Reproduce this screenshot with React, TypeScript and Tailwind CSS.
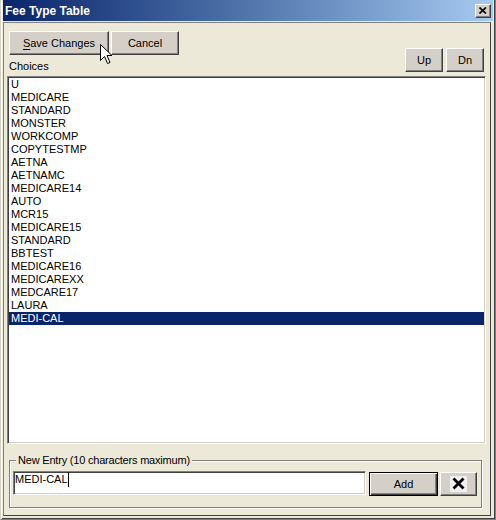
import React from "react";

const raised =
  "border border-t-white border-l-white border-r-[#404040] border-b-[#404040] bg-[#D4D0C8] shadow-[inset_-1px_-1px_0_#808080]";
const sunken =
  "border border-t-[#808080] border-l-[#808080] border-r-white border-b-white bg-white shadow-[inset_1px_1px_0_#404040,inset_-1px_-1px_0_#d4d0c8]";

const choices = [
  "U",
  "MEDICARE",
  "STANDARD",
  "MONSTER",
  "WORKCOMP",
  "COPYTESTMP",
  "AETNA",
  "AETNAMC",
  "MEDICARE14",
  "AUTO",
  "MCR15",
  "MEDICARE15",
  "STANDARD",
  "BBTEST",
  "MEDICARE16",
  "MEDICAREXX",
  "MEDCARE17",
  "LAURA",
  "MEDI-CAL",
];

function Button({ className = "", children }: { className?: string; children: React.ReactNode }) {
  return (
    <button type="button" className={`${raised} flex h-[24px] items-center justify-center text-[11px] leading-[13px] text-black ${className}`}>
      {children}
    </button>
  );
}

function Cursor() {
  return (
    <svg className="pointer-events-none absolute left-[99px] top-[44px]" width="13" height="21" viewBox="0 0 13 21" aria-hidden="true">
      <path
        d="M0.5 0.5 L0.5 16.5 L4.5 12.5 L7.5 19.5 L10 18.5 L7 11.5 L12 11.5 Z"
        fill="#fff"
        stroke="#000"
        strokeWidth="1"
        strokeLinejoin="miter"
      />
    </svg>
  );
}

export default function App() {
  const selected = choices.length - 1;

  return (
    <div className="relative flex h-[520px] w-[496px] flex-col border-x border-b border-l-[#D4D0C8] border-r-[#808080] border-b-[#808080] bg-[#ECE9D8] pl-[2px] pr-[2px] font-['Liberation_Sans',Arial,sans-serif] shadow-[inset_1px_0_0_#fff,inset_-1px_-1px_0_#404040]">
      {/* title bar */}
      <div className="flex h-[21px] w-[490px] items-center justify-between bg-gradient-to-r from-[#0A246A] to-[#A6CAF0] pl-[2px] pr-[2px]">
        <span className="text-[12px] font-bold leading-[14px] text-white">Fee Type Table</span>
        <button type="button" className={`${raised} flex h-[14px] w-[16px] items-center justify-center`}>
          <svg width="8" height="7" viewBox="0 0 8 7" aria-hidden="true">
            <path d="M0.5 0.5 L7 6.5 M7 0.5 L0.5 6.5" stroke="#000" strokeWidth="1.7" />
          </svg>
        </button>
      </div>

      {/* client area */}
      <div className="mt-[1px] flex h-[494px] w-[488px] flex-col border border-t-[#808080] border-l-[#808080] border-r-[#404040] border-b-[#404040]">
        <div className="flex justify-between">
          <div className="ml-[5px] mt-[8px]">
            <div className="flex gap-[2px]">
              <Button className="w-[100px]">
                <span>
                  <span className="underline underline-offset-[2px]">S</span>ave Changes
                </span>
              </Button>
              <Button className="w-[68px]">Cancel</Button>
            </div>
            <div className="mt-[5px] h-[13px] text-[11px] leading-[13px] text-black">Choices</div>
          </div>
          <div className="mr-[6px] mt-[25px] flex gap-[3px]">
            <Button className="w-[38px]">Up</Button>
            <Button className="w-[38px]">Dn</Button>
          </div>
        </div>

        <div className={`${sunken} ml-[3px] mt-[3px] h-[368px] w-[479px] p-[1px]`}>
          {choices.map((c, i) => (
            <div
              key={i}
              className={`h-[13px] pl-[2px] text-[11px] leading-[13px] ${
                i === selected ? "bg-[#0A246A] text-white" : "text-black"
              }`}
            >
              {c}
            </div>
          ))}
        </div>

        <fieldset className="ml-[5px] mt-[10px] w-[473px] border border-[#808080] pb-[11px] pl-[3px] pt-[4px] shadow-[inset_1px_1px_0_#fff,1px_1px_0_#fff]">
          <legend className="ml-[3px] bg-[#ECE9D8] px-[2px] text-[11px] leading-[13px] tracking-[-0.2px] text-black">
            New Entry (10 characters maximum)
          </legend>
          <div className="flex items-start">
            <div className={`${sunken} flex h-[24px] w-[353px] items-start text-[11px] leading-[13px] text-black`}>
              <span className="pl-[1px] pt-[1px]">MEDI-CAL</span>
              <span className="inline-block h-[15px] w-[1px] bg-black" />
            </div>
            <button
              type="button"
              className="ml-[3px] mt-[1px] flex h-[24px] w-[69px] items-center justify-center border border-black bg-[#D4D0C8] text-[11px] leading-[13px] text-black shadow-[inset_1px_1px_0_#fff,inset_-1px_-1px_0_#404040,inset_-2px_-2px_0_#808080]"
            >
              Add
            </button>
            <Button className="ml-[2px] mt-[1px] w-[37px]">
              <span className="flex h-[16px] w-[17px] items-center justify-center bg-[#F0F0F0]">
                <svg width="17" height="16" viewBox="0 0 17 16" aria-hidden="true">
                  <path d="M3.5 2.5 L13.5 12.5 M13.5 2.5 L3.5 12.5" stroke="#000" strokeWidth="2.8" />
                </svg>
              </span>
            </Button>
          </div>
        </fieldset>
      </div>

      <Cursor />
    </div>
  );
}
